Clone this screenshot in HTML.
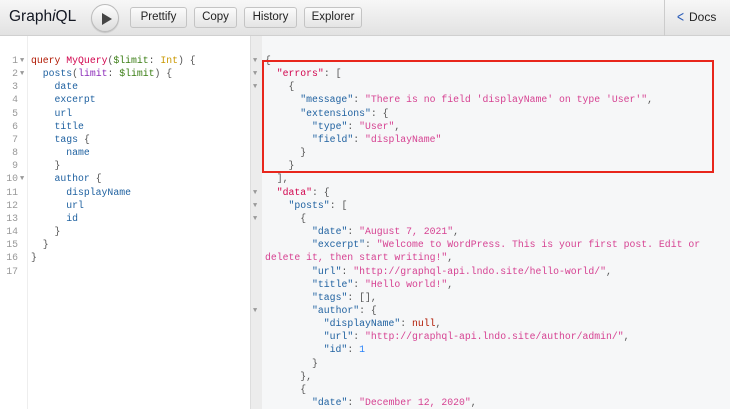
<!DOCTYPE html>
<html><head><meta charset="utf-8"><style>
*{margin:0;padding:0;box-sizing:border-box}
body{width:730px;height:409px;overflow:hidden;background:#fff;font-family:"Liberation Sans",sans-serif;position:relative}
.tb{position:absolute;left:0;top:0;width:730px;height:36px;background:linear-gradient(#f7f7f7,#e2e2e2);border-bottom:1px solid #d0d0d0}
.title{position:absolute;left:9px;top:8px;font-size:15.5px;color:#141823}
.play{position:absolute;left:91px;top:4px;width:28px;height:28px;border-radius:50%;border:1px solid #bbb;background:linear-gradient(#fdfdfd,#dcdcdc);box-shadow:0 1px 1px rgba(0,0,0,.15)}
.play:after{content:"";position:absolute;left:10px;top:8px;border-left:10px solid #444;border-top:6px solid transparent;border-bottom:6px solid transparent}
.btn{position:absolute;top:7px;height:21px;border:1px solid #c4c4c4;border-radius:3px;background:linear-gradient(#fbfbfb,#e4e4e4);font-size:11.5px;color:#222;text-align:center;line-height:19px}
.sep{position:absolute;left:664px;top:0;width:1px;height:36px;background:#ccc}
.docs{position:absolute;left:677px;top:10px;font-size:12px;color:#222}
.docs b{color:#2b5cb8;font-weight:normal;margin-right:5px;display:inline-block;transform:scaleY(1.3)}
.gut{position:absolute;left:0;top:36px;width:28px;height:373px;background:#fff;border-right:1px solid #eee}
.strip{position:absolute;left:250px;top:36px;width:12px;height:373px;background:#ececec;border-left:1px solid #ddd}
.res{position:absolute;left:262px;top:36px;width:468px;height:373px;background:#f6f7f8}
pre{position:absolute;font-family:"Liberation Mono",monospace;font-size:9.8px;line-height:13.15px;white-space:pre}
.ln{left:6px;top:54px;color:#999;text-align:right;width:12px}
.ar{color:#999;font-size:7px}
.k{color:#b11a04}.d{color:#d2054e}.v{color:#397d13}.a{color:#8b2bb9}.t{color:#ca9800}.p{color:#1f61a0}.s{color:#d64292}.pu{color:#555}
.box{position:absolute;left:262px;top:60px;width:452px;height:113px;border:2px solid #e8261c}
</style></head><body>
<div class="tb">
<div class="title">Graph<i>i</i>QL</div>
<div class="play"></div>
<div class="btn" style="left:130px;width:57px">Prettify</div>
<div class="btn" style="left:194px;width:43px">Copy</div>
<div class="btn" style="left:244px;width:53px">History</div>
<div class="btn" style="left:304px;width:58px">Explorer</div>
<div class="sep"></div>
<div class="docs"><b>&lt;</b>Docs</div>
</div>
<div class="gut"></div>
<div class="strip"></div>
<div class="res"></div>
<pre class="ln">1
2
3
4
5
6
7
8
9
10
11
12
13
14
15
16
17</pre>
<pre class="ar" style="left:20px;top:55px;line-height:13.15px">▼
▼







▼</pre>
<pre class="ar" style="left:253px;top:55px;line-height:13.15px">▼
▼
▼







▼
▼
▼






▼</pre>
<pre style="left:31px;top:54px" class="pu"><span class="k">query</span> <span class="d">MyQuery</span>(<span class="v">$limit</span>: <span class="t">Int</span>) {
  <span class="p">posts</span>(<span class="a">limit</span>: <span class="v">$limit</span>) {
    <span class="p">date</span>
    <span class="p">excerpt</span>
    <span class="p">url</span>
    <span class="p">title</span>
    <span class="p">tags</span> {
      <span class="p">name</span>
    }
    <span class="p">author</span> {
      <span class="p">displayName</span>
      <span class="p">url</span>
      <span class="p">id</span>
    }
  }
}</pre>
<pre style="left:265px;top:54px" class="pu">{
  <span class="d">"errors"</span>: [
    {
      <span class="p">"message"</span>: <span class="s">"There is no field 'displayName' on type 'User'"</span>,
      <span class="p">"extensions"</span>: {
        <span class="p">"type"</span>: <span class="s">"User"</span>,
        <span class="p">"field"</span>: <span class="s">"displayName"</span>
      }
    }
  ],
  <span class="d">"data"</span>: {
    <span class="p">"posts"</span>: [
      {
        <span class="p">"date"</span>: <span class="s">"August 7, 2021"</span>,
        <span class="p">"excerpt"</span>: <span class="s">"Welcome to WordPress. This is your first post. Edit or</span>
<span class="s">delete it, then start writing!"</span>,
        <span class="p">"url"</span>: <span class="s">"http://graphql-api.lndo.site/hello-world/"</span>,
        <span class="p">"title"</span>: <span class="s">"Hello world!"</span>,
        <span class="p">"tags"</span>: [],
        <span class="p">"author"</span>: {
          <span class="p">"displayName"</span>: <span class="k">null</span>,
          <span class="p">"url"</span>: <span class="s">"http://graphql-api.lndo.site/author/admin/"</span>,
          <span class="p">"id"</span>: <span style="color:#2882f9">1</span>
        }
      },
      {
        <span class="p">"date"</span>: <span class="s">"December 12, 2020"</span>,</pre>
<div class="box"></div>
</body></html>
